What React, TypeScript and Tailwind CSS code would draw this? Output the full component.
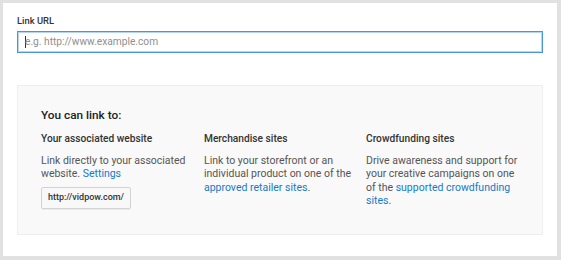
export default function App() {
  const font = { fontFamily: 'Roboto, "Liberation Sans", Arial, sans-serif' };
  return (
    <div className="w-[561px] h-[260px] bg-[#e1e1e1] pt-[3px] pl-[3px] pr-[4px] pb-[4px]" style={font}>
      <div className="h-full bg-white px-[14px] pt-[11px]">
        <div className="text-[9.4px] leading-[13px] font-medium text-[#333]">Link URL</div>
        <div className="mt-[4px] h-[22px] border border-[#4a97d6] shadow-[inset_0_0_0_1px_#b5d5f0] flex items-center pl-[7px]">
          <span className="w-px h-[12px] bg-[#333] mr-[-1px]"></span>
          <span className="text-[10.2px] text-[#8f8f8f]">e.g. http://www.example.com</span>
        </div>
        <div className="mt-[32px] h-[150px] bg-[#f9f9f9] border border-[#eeeeee] pl-[23px] pt-[21px]">
          <div className="text-[11.8px] leading-[16px] font-medium text-[#222]">You can link to:</div>
          <div className="mt-[9px] grid grid-cols-[163px_162px_1fr]">
            <div>
              <div className="text-[10.2px] leading-[13px] font-medium text-[#333]">Your associated website</div>
              <p className="mt-[9px] text-[10.5px] leading-[13.3px] text-[#555] w-[152px]">
                Link directly to your associated website. <span className="text-[#167ac6]">Settings</span>
              </p>
              <div className="mt-[6px] inline-flex items-center justify-center h-[22px] w-[90px] border border-[#d3d3d3] bg-[#f8f8f8] rounded-[2px] shadow-[0_1px_0_rgba(0,0,0,0.05)] text-[9px] font-medium text-[#333]">
                http://vidpow.com/
              </div>
            </div>
            <div>
              <div className="text-[10.2px] leading-[13px] font-medium text-[#333]">Merchandise sites</div>
              <p className="mt-[9px] text-[10.5px] leading-[13.3px] text-[#555] w-[152px]">
                Link to your storefront or an individual product on one of the{' '}
                <span className="text-[#167ac6]">approved retailer sites</span>.
              </p>
            </div>
            <div>
              <div className="text-[10.2px] leading-[13px] font-medium text-[#333]">Crowdfunding sites</div>
              <p className="mt-[9px] text-[10.5px] leading-[13.3px] text-[#555] w-[152px]">
                Drive awareness and support for your creative campaigns on one of the{' '}
                <span className="text-[#167ac6]">supported crowdfunding sites</span>.
              </p>
            </div>
          </div>
        </div>
      </div>
    </div>
  );
}
